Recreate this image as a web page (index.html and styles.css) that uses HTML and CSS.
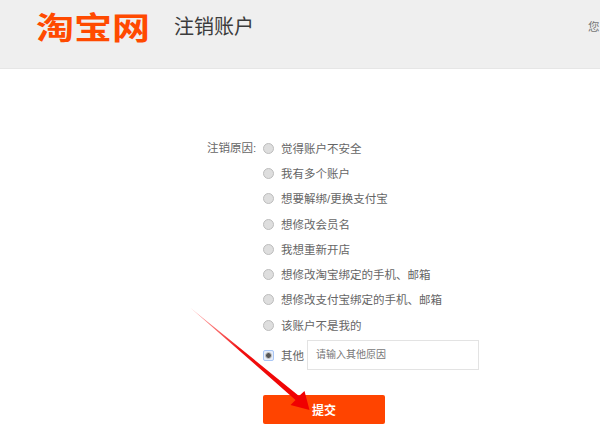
FILE: index.html
```html
<!DOCTYPE html>
<html lang="zh-CN">
<head>
<meta charset="utf-8">
<title>注销账户</title>
<link rel="stylesheet" href="styles.css">
</head>
<body>
<header class="top">
  <span class="logo">淘宝网</span>
  <h1 class="title">注销账户</h1>
  <span class="hello">您</span>
</header>
<main class="form">
  <div class="label">注销原因:</div>
  <div class="options">
    <label class="opt"><span class="radio"></span>觉得账户不安全</label>
    <label class="opt"><span class="radio"></span>我有多个账户</label>
    <label class="opt"><span class="radio"></span>想要解绑/更换支付宝</label>
    <label class="opt"><span class="radio"></span>想修改会员名</label>
    <label class="opt"><span class="radio"></span>我想重新开店</label>
    <label class="opt"><span class="radio"></span>想修改淘宝绑定的手机、邮箱</label>
    <label class="opt"><span class="radio"></span>想修改支付宝绑定的手机、邮箱</label>
    <label class="opt"><span class="radio"></span>该账户不是我的</label>
    <div class="opt other"><span class="radio on"></span>其他<div class="reason">请输入其他原因</div></div>
    <button class="submit" type="button">提交</button>
  </div>
</main>
<svg class="arrow" width="600" height="439" viewBox="0 0 600 439" aria-hidden="true">
  <defs>
    <linearGradient id="fade" gradientUnits="userSpaceOnUse" x1="190" y1="308" x2="300" y2="402">
      <stop offset="0" stop-color="#ff5a5a" stop-opacity=".45"/>
      <stop offset=".45" stop-color="#f01010"/>
      <stop offset="1" stop-color="#f00000"/>
    </linearGradient>
  </defs>
  <path d="M190 307.500L299 396 304.500 391 309.500 410 290.500 405 295.500 400Z" fill="url(#fade)"/>
</svg>
</body>
</html>
```
FILE: styles.css
```css
html, body { margin: 0; padding: 0; }
body {
  position: relative;
  width: 600px;
  height: 439px;
  overflow: hidden;
  background: #fff;
  font-family: "Liberation Sans", "Noto Sans CJK SC", sans-serif;
  font-size: 11.5px;
  color: #666;
}
.top {
  display: flex;
  align-items: flex-start;
  height: 68px;
  padding-left: 36px;
  background: #efefef;
  border-bottom: 1px solid #e6e6e6;
  overflow: hidden;
}
.logo {
  flex: none;
  width: 138px;
  margin-top: 5px;
  font-family: "Noto Sans CJK SC", sans-serif;
  font-size: 38px;
  font-weight: 700;
  line-height: 42px;
  color: #ff4a00;
  white-space: nowrap;
  transform: scaleY(.8);
}
.title {
  flex: none;
  margin: 13px 0 0;
  font-size: 20px;
  font-weight: 400;
  line-height: 28px;
  color: #3c3c3c;
  white-space: nowrap;
}
.hello {
  flex: none;
  margin: 19px 0 0 334px;
  font-size: 11.5px;
  line-height: 16px;
  color: #777;
  white-space: nowrap;
}
.form {
  display: flex;
  margin-top: 66px;
  padding-left: 207px;
}
.label {
  flex: none;
  width: 56px;
  line-height: 26px;
  white-space: nowrap;
}
.options {
  display: flex;
  flex-direction: column;
}
.opt {
  display: flex;
  align-items: center;
  height: 25.3px;
  white-space: nowrap;
}
.radio {
  box-sizing: border-box;
  flex: none;
  width: 11px;
  height: 11px;
  margin: 1px 7px 0 0;
  border: 1px solid #bdbdbd;
  border-radius: 50%;
  background: #dedede;
}
.radio.on {
  display: flex;
  align-items: center;
  justify-content: center;
  border: 1px solid #a9c6f5;
  border-radius: 2px;
  background: #e6edf9;
}
.radio.on::after {
  content: "";
  box-sizing: border-box;
  width: 7px;
  height: 7px;
  border-radius: 50%;
  background: #555;
  border: 1px solid #ccc;
}
.other {
  height: 30px;
  margin-top: 3px;
}
.reason {
  box-sizing: border-box;
  width: 172px;
  height: 30px;
  margin-left: 3px;
  padding-left: 8px;
  border: 1px solid #e3e3e3;
  font-size: 10px;
  line-height: 28px;
  color: #777;
}
.submit {
  width: 122px;
  height: 29px;
  margin-top: 25px;
  padding: 0;
  border: 0;
  border-radius: 2px;
  background: #ff4400;
  color: #fff;
  font: bold 12px "Liberation Sans", "Noto Sans CJK SC", sans-serif;
}
.arrow {
  position: absolute;
  left: 0;
  top: 0;
  pointer-events: none;
}
```
